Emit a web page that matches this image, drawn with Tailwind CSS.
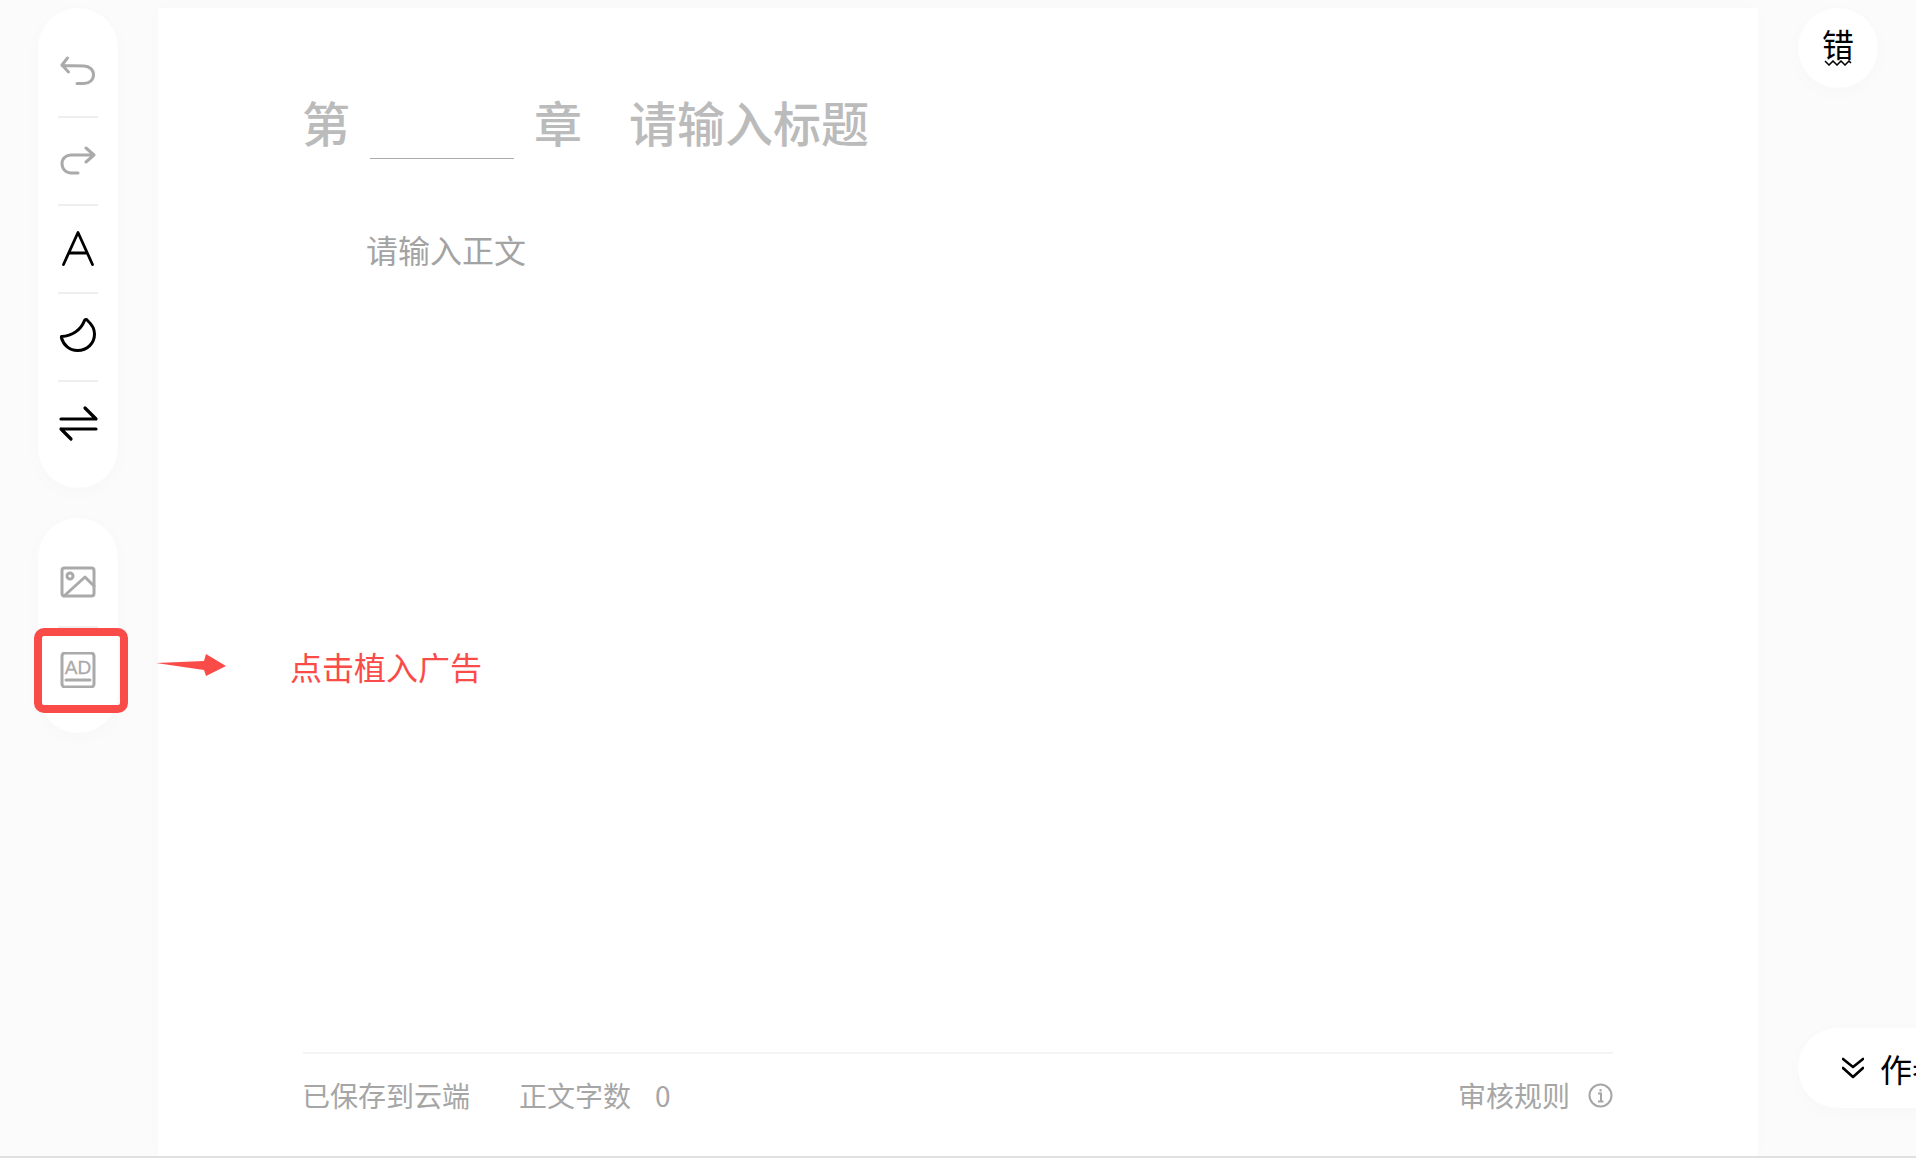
<!DOCTYPE html>
<html lang="zh-CN">
<head>
<meta charset="UTF-8">
<title>写作</title>
<script src="https://cdn.jsdelivr.net/npm/@tailwindcss/browser@4"></script>
</head>
<body class="bg-white overflow-hidden font-['Noto_Sans_CJK_SC','Noto_Sans',sans-serif]">
<div class="relative w-[1916px] h-[1158px] flex bg-[#fbfbfb] border-b-2 border-[#e0e0e0] overflow-hidden">

  <!-- left tools -->
  <aside class="w-[158px] shrink-0 pt-2 pl-[38px]">
    <div class="w-20 h-[480px] bg-white rounded-full pt-[22px] shadow-[0_4px_20px_rgba(0,0,0,0.02)] flex flex-col items-center">
      <div class="w-10 h-[88px] shrink-0 pb-1 border-b-2 border-[#efefef] flex items-center justify-center">
        <svg class="w-9 h-9" viewBox="0 0 36 36" fill="none" stroke="#aaaaaa" stroke-width="3" stroke-linecap="round" stroke-linejoin="round"><path d="M7.500 5 2 12l6.500 7M2 12.500 24 13c5.500.2 9.500 4 9.500 8.700 0 5-4 8.800-9.500 8.800h-7"/></svg>
      </div>
      <div class="w-10 h-[88px] shrink-0 pb-1 border-b-2 border-[#efefef] flex items-center justify-center">
        <svg class="w-9 h-9" viewBox="0 0 36 36" fill="none" stroke="#aaaaaa" stroke-width="3" stroke-linecap="round" stroke-linejoin="round"><path d="M26 7l8 7-8 7M34 14H11c-5 0-9 3.500-9 8.500 0 5.500 4 9.500 9 9.500h7"/></svg>
      </div>
      <div class="w-10 h-[88px] shrink-0 pb-1 border-b-2 border-[#efefef] flex items-center justify-center">
        <svg class="w-9 h-9 overflow-visible" viewBox="0 0 36 36" fill="none" stroke="#000000" stroke-width="2.800" stroke-linecap="round" stroke-linejoin="round"><path d="M3.500 35.500 18 3.500l14.500 32M9.500 24h17"/></svg>
      </div>
      <div class="w-10 h-[88px] shrink-0 pb-1 border-b-2 border-[#efefef] flex items-center justify-center">
        <svg class="w-9 h-9 overflow-visible" viewBox="0 0 36 36" fill="none" stroke="#000000" stroke-width="3" stroke-linecap="round" stroke-linejoin="round"><path d="M1.500 19.500C12 19 21 13 24.500 3.500q1.500-1.800 3 0C32.500 8 34.500 12 34.500 17c0 9-7 16.500-17 16.500-8 0-14-5.500-16-12.500q-.3-1 0-1.500z"/></svg>
      </div>
      <div class="w-10 h-[84px] shrink-0 flex items-center justify-center">
        <svg class="w-9 h-9 overflow-visible" viewBox="0 0 36 36" fill="none" stroke="#000000" stroke-width="3.200" stroke-linecap="round" stroke-linejoin="round"><path d="M25 2l11 11H1M1 23h35M1 23l10 10"/></svg>
      </div>
    </div>

    <div class="w-20 h-[215px] mt-[30px] bg-white rounded-full pt-[22px] shadow-[0_4px_20px_rgba(0,0,0,0.02)] flex flex-col items-center">
      <div class="w-10 h-[88px] shrink-0 pb-1 border-b-2 border-[#efefef] flex items-center justify-center">
        <svg class="w-9 h-9" viewBox="0 0 36 36" fill="none" stroke="#aaaaaa" stroke-width="3" stroke-linecap="round" stroke-linejoin="round"><rect x="2" y="5" width="32" height="28" rx="2.500"/><circle cx="10" cy="13" r="3"/><path d="M4 33 25 14l9 9"/></svg>
      </div>
      <div class="w-10 h-[84px] shrink-0 flex items-center justify-center">
        <svg class="w-9 h-9" viewBox="0 0 36 36" fill="none" stroke="#aaaaaa" stroke-width="3" stroke-linecap="round"><rect x="2" y="1" width="32" height="34" rx="3"/><path d="M6 28h24"/><text x="18" y="21.500" text-anchor="middle" fill="#aaaaaa" stroke="#aaaaaa" stroke-width="0.300" font-family="Liberation Sans" font-size="19">AD</text></svg>
      </div>
    </div>
  </aside>

  <!-- editor -->
  <main class="w-[1600px] h-[1148px] mt-2 shrink-0 bg-white shadow-[0_0_20px_rgba(0,0,0,0.015)] px-[145px] flex flex-col">
    <div class="mt-[83px] h-[60px] flex items-start text-[48px] leading-[60px] font-medium text-[#bbbbbb]">
      <span class="-ml-px">第</span>
      <span class="w-[144px] h-[68px] ml-5 mr-5 border-b border-[#aaaaaa]"></span>
      <span>章</span>
      <span class="ml-[47px]">请输入标题</span>
    </div>
    <p class="mt-[76px] ml-[63px] text-[32px] leading-[44px] text-[#a3a3a3]">请输入正文</p>
    <div class="mt-auto h-[104px] pb-5 border-t-2 border-[#f4f4f4] flex items-center text-[28px] text-[#a6a6a6]">
      <span class="-ml-px">已保存到云端</span>
      <span class="ml-[49px]">正文字数</span>
      <span class="ml-[24px]">0</span>
      <span class="ml-auto">审核规则</span>
      <svg class="w-[25px] h-[25px] ml-[18px]" viewBox="0 0 25 25" fill="none" stroke="#a6a6a6" stroke-width="2"><circle cx="12.500" cy="12.500" r="11"/><path d="M10 10.500h3v8M10 18.500h5.500M12.500 6v2.500"/></svg>
    </div>
  </main>

  <!-- right side -->
  <aside class="w-[158px] shrink-0 pt-2 pb-[48px] pl-10 flex flex-col justify-between">
    <div class="w-20 h-20 bg-white rounded-full pb-1 shadow-[0_4px_20px_rgba(0,0,0,0.02)] flex flex-col items-center justify-center">
      <span class="text-[32px] leading-[34px] text-black">错</span>
      <svg class="w-[28px] h-[6px]" viewBox="0 0 28 6" fill="none" stroke="#000000" stroke-width="1.500"><path d="M1 1l4 4 4-4 4 4 4-4 4 4 4-4 2 2"/></svg>
    </div>
    <div class="w-[220px] h-20 bg-white rounded-full pl-[44px] shadow-[0_4px_20px_rgba(0,0,0,0.02)] flex items-center shrink-0 whitespace-nowrap">
      <svg class="w-[22px] h-[22px] shrink-0" viewBox="0 0 22 22" fill="none" stroke="#000000" stroke-width="2.600" stroke-linecap="round" stroke-linejoin="round"><path d="M1 2l10 8 10-8M1 11l10 9 10-9"/></svg>
      <span class="ml-[16px] text-[32px] text-black">作者有话说</span>
    </div>
  </aside>

  <!-- annotation over the page -->
  <div class="absolute left-[34px] top-[628px] w-[94px] h-[85px] border-[8px] border-[#f94c48] rounded-[10px]"></div>
  <svg class="absolute left-[156px] top-[654px] w-[70px] h-[22px]" viewBox="0 0 70 22" fill="#f94c48"><path d="M0 9l48-2 2-7 20 12-20 10-2-6z"/></svg>
  <span class="absolute left-[290px] top-[643px] text-[32px] leading-[46px] text-[#f94c48]">点击植入广告</span>
</div>
</body>
</html>
